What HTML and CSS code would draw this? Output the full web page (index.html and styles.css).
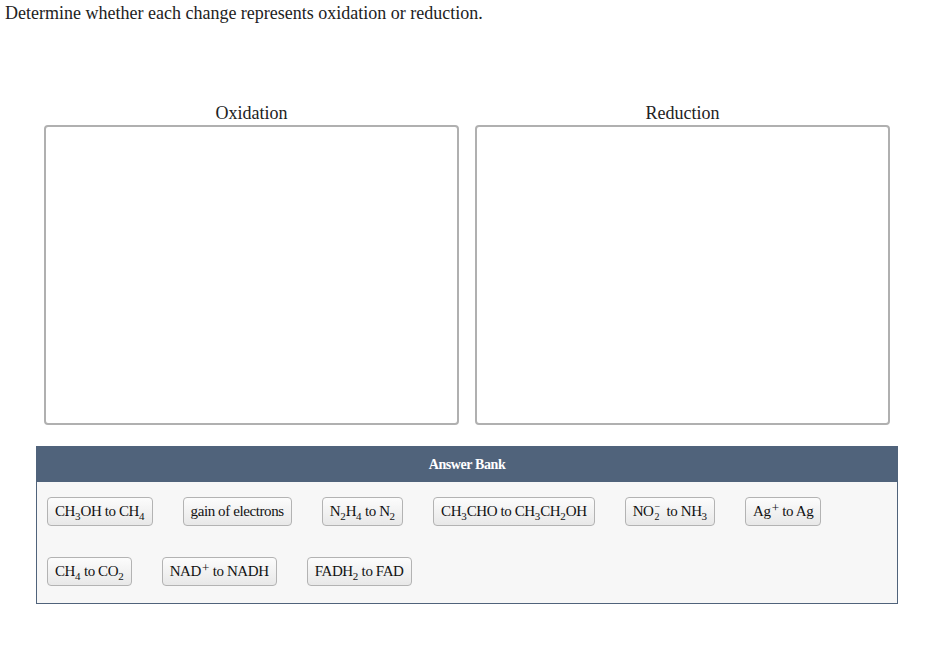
FILE: index.html
```html
<!DOCTYPE html>
<html>
<head>
<meta charset="utf-8">
<link rel="stylesheet" href="styles.css">
</head>
<body>
<p class="prompt">Determine whether each change represents oxidation or reduction.</p>
<div class="activity">
  <div class="bins">
    <div class="bin">
      <div class="bin-label">Oxidation</div>
      <div class="bin-drop"></div>
    </div>
    <div class="bin">
      <div class="bin-label">Reduction</div>
      <div class="bin-drop"></div>
    </div>
  </div>
  <div class="bank">
    <div class="bank-head">Answer Bank</div>
    <div class="bank-body">
      <span class="chip">CH<sub>3</sub>OH to CH<sub>4</sub></span>
      <span class="chip">gain of electrons</span>
      <span class="chip">N<sub>2</sub>H<sub>4</sub> to N<sub>2</sub></span>
      <span class="chip">CH<sub>3</sub>CHO to CH<sub>3</sub>CH<sub>2</sub>OH</span>
      <span class="chip">NO<span class="ion"><span class="ion-charge">&minus;</span><span class="ion-count">2</span></span> to NH<sub>3</sub></span>
      <span class="chip">Ag<sup>+</sup> to Ag</span>
      <span class="chip">CH<sub>4</sub> to CO<sub>2</sub></span>
      <span class="chip">NAD<sup>+</sup> to NADH</span>
      <span class="chip">FADH<sub>2</sub> to FAD</span>
    </div>
  </div>
</div>
</body>
</html>
```
FILE: styles.css
```css
html, body {
  margin: 0;
  padding: 0;
  background: #fff;
}

body {
  font-family: "Liberation Serif", "Times New Roman", serif;
  color: #222;
}

.prompt {
  margin: 0;
  padding: 2px 5px 0;
  font-size: 18px;
  line-height: 22px;
}

.activity {
  width: 862px;
  margin: 78px 0 0 36px;
}

.bins {
  display: flex;
  gap: 16px;
  padding: 0 8px;
}

.bin {
  flex: 1;
  display: flex;
  flex-direction: column;
}

.bin-label {
  text-align: center;
  font-size: 18px;
  line-height: 22px;
  margin-bottom: 1px;
}

.bin-drop {
  height: 296px;
  border: 2px solid #b0b0b0;
  border-radius: 4px;
  background: #fff;
}

.bank {
  margin-top: 21px;
  border: 1px solid #50637b;
}

.bank-head {
  background: #50637b;
  color: #fff;
  font-weight: bold;
  font-size: 14px;
  letter-spacing: -0.4px;
  text-align: center;
  height: 35px;
  line-height: 35px;
}

.bank-body {
  background: #f7f7f7;
  display: flex;
  flex-wrap: wrap;
  align-items: flex-start;
  gap: 31px 30px;
  padding: 15px 10px 17px;
}

.chip {
  display: inline-block;
  height: 27px;
  line-height: 27px;
  padding: 0 7px;
  border: 1px solid #b3b3b3;
  border-radius: 4px;
  background: linear-gradient(#fcfcfc, #e8e8e8);
  font-size: 15px;
  letter-spacing: -0.4px;
  color: #111;
  white-space: nowrap;
}

.chip sub,
.chip sup {
  line-height: 0;
  letter-spacing: 0;
}

.chip sub {
  font-size: 11px;
  vertical-align: -4px;
}

.chip sup {
  font-size: 13px;
  vertical-align: 4px;
  margin-left: 1px;
}

/* stacked charge over subscript, as in NO2- */
.ion {
  display: inline-block;
  vertical-align: -4px;
  font-size: 10px;
  line-height: 10px;
  letter-spacing: 0;
  margin: 0 3px 0 1px;
}

.ion-charge,
.ion-count {
  display: block;
  line-height: 10px;
}
```
